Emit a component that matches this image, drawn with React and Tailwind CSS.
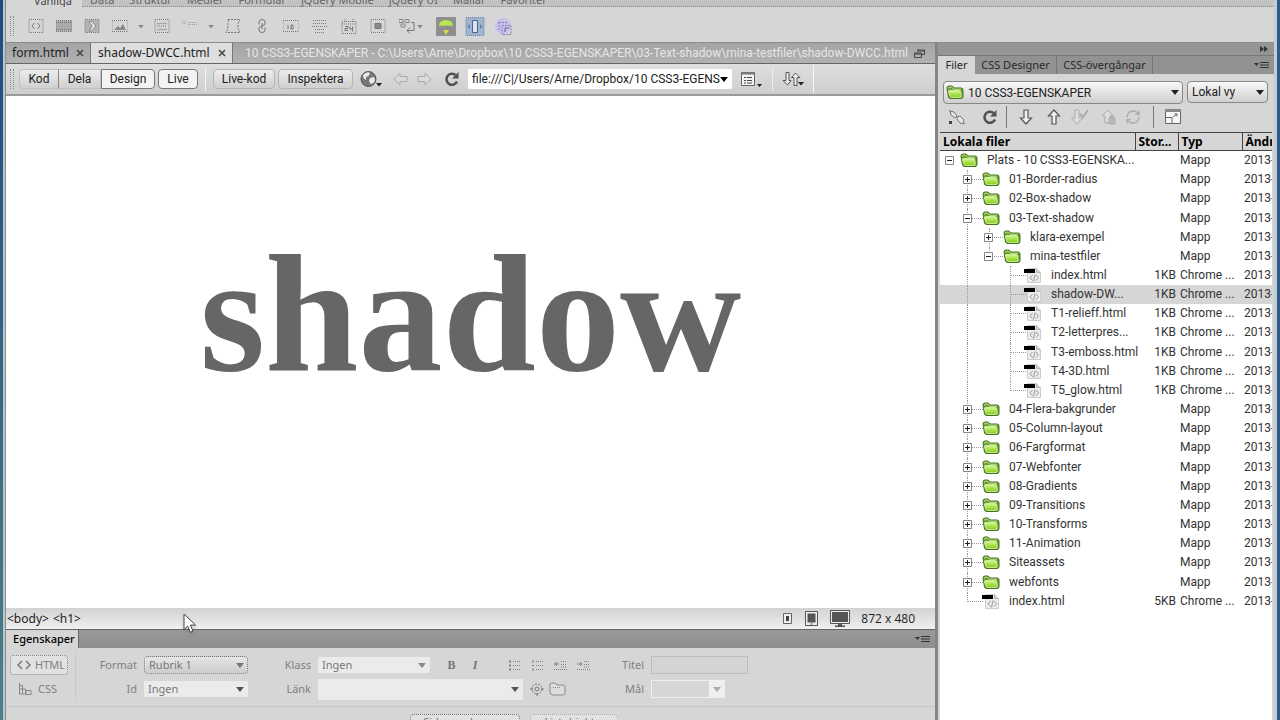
import React, { useState } from "react";
import { LuRefreshCw } from "react-icons/lu";

const insertTabs = ["Data", "Struktur", "Medier", "Formulär", "jQuery Mobile", "jQuery UI", "Mallar", "Favoriter"];

const files = [
  { name: "Plats - 10 CSS3-EGENSKA...", depth: 0, kind: "open", type: "Mapp" },
  { name: "01-Border-radius", depth: 1, kind: "closed", type: "Mapp" },
  { name: "02-Box-shadow", depth: 1, kind: "closed", type: "Mapp" },
  { name: "03-Text-shadow", depth: 1, kind: "open", type: "Mapp" },
  { name: "klara-exempel", depth: 2, kind: "closed", type: "Mapp" },
  { name: "mina-testfiler", depth: 2, kind: "open", type: "Mapp", last: true },
  { name: "index.html", depth: 3, kind: "file", size: "1KB", type: "Chrome ..." },
  { name: "shadow-DW...", depth: 3, kind: "file", size: "1KB", type: "Chrome ..." },
  { name: "T1-relieff.html", depth: 3, kind: "file", size: "1KB", type: "Chrome ..." },
  { name: "T2-letterpres...", depth: 3, kind: "file", size: "1KB", type: "Chrome ..." },
  { name: "T3-emboss.html", depth: 3, kind: "file", size: "1KB", type: "Chrome ..." },
  { name: "T4-3D.html", depth: 3, kind: "file", size: "1KB", type: "Chrome ..." },
  { name: "T5_glow.html", depth: 3, kind: "file", size: "1KB", type: "Chrome ...", last: true },
  { name: "04-Flera-bakgrunder", depth: 1, kind: "closed", type: "Mapp" },
  { name: "05-Column-layout", depth: 1, kind: "closed", type: "Mapp" },
  { name: "06-Fargformat", depth: 1, kind: "closed", type: "Mapp" },
  { name: "07-Webfonter", depth: 1, kind: "closed", type: "Mapp" },
  { name: "08-Gradients", depth: 1, kind: "closed", type: "Mapp" },
  { name: "09-Transitions", depth: 1, kind: "closed", type: "Mapp" },
  { name: "10-Transforms", depth: 1, kind: "closed", type: "Mapp" },
  { name: "11-Animation", depth: 1, kind: "closed", type: "Mapp" },
  { name: "Siteassets", depth: 1, kind: "closed", type: "Mapp" },
  { name: "webfonts", depth: 1, kind: "closed", type: "Mapp" },
  { name: "index.html", depth: 1, kind: "file", size: "5KB", type: "Chrome ...", last: true },
];

/* ---------- icons ---------- */

function Caret({ className = "" }) {
  return (
    <svg viewBox="0 0 8 5" className={`w-2 h-[5px] shrink-0 ${className}`} fill="currentColor">
      <path d="M0 0h8L4 5z" />
    </svg>
  );
}

function FolderIcon() {
  return (
    <svg viewBox="0 0 18 15" className="w-[18px] h-[15px] shrink-0">
      <defs>
        <linearGradient id="folder" x1="0" y1="0" x2="0" y2="1">
          <stop offset="0" stopColor="#d6f79c" />
          <stop offset=".5" stopColor="#a9e34c" />
          <stop offset="1" stopColor="#86cc22" />
        </linearGradient>
      </defs>
      <path d="M1 3q0-2 2-2h3l2 2h7q2 0 2 2v6.500q0 2-2 2H5Q3 13.500 2.500 12z" fill="#6a9f35" stroke="#44701c" />
      <path d="M2.200 3.500q0-1.300 1.300-1.300h2.200l2 2H15" fill="none" stroke="#c4ea8c" />
      <path d="M3.500 5.500H13q1.500 0 1.700 1.500l.6 4q.2 1.500-1.300 1.500H5.500q-1.300 0-1.600-1.300L2.500 7q-.3-1.500 1-1.500z" fill="url(#folder)" stroke="#e6fbc0" strokeWidth=".7" />
    </svg>
  );
}

function FileIcon() {
  return (
    <svg viewBox="0 0 18 17" className="w-[18px] h-[17px] shrink-0">
      <path d="M3.500 1.500h9l4 4v10h-13z" fill="#ececec" stroke="#cdcdcd" />
      <path d="M12.500 1.500v4h4" fill="#d2d2d2" stroke="#b5b5b5" />
      <path d="M0 2h11v4H0z" fill="#000" />
      <path d="M8.500 8 6 10.800l2.500 2.700M12 8l2.500 2.800-2.500 2.700M11 7.500l-1.500 7" fill="none" stroke="#999" />
    </svg>
  );
}

function Expander({ open }) {
  return (
    <svg viewBox="0 0 9 9" className="relative w-[9px] h-[9px] shrink-0">
      <path d="M.5.5h8v8h-8z" fill="#fff" stroke="#858585" />
      <path d={open ? "M2 4.500h5" : "M2 4.500h5M4.500 2v5"} stroke="#222" />
    </svg>
  );
}

function MenuIcon() {
  return (
    <svg viewBox="0 0 16 9" className="w-4 h-[9px]" fill="none" stroke="#333">
      <path d="M0 2h5L2.500 5z" fill="#333" stroke="none" />
      <path d="M6 1.500h9M6 4h9M6 6.500h9" />
    </svg>
  );
}

function DownArrow({ color = "#555" }) {
  return (
    <svg viewBox="0 0 14 16" className="w-3.5 h-4" fill="#f1f1f1" stroke={color} strokeWidth="1.2">
      <path d="M5 1h4v8h3.500L7 15 1.500 9H5z" />
    </svg>
  );
}

function UpArrow({ color = "#555" }) {
  return (
    <svg viewBox="0 0 14 16" className="w-3.5 h-4" fill="#f1f1f1" stroke={color} strokeWidth="1.2">
      <path d="M5 15h4V7h3.500L7 1 1.500 7H5z" />
    </svg>
  );
}

function ReloadIcon() {
  return (
    <svg viewBox="0 0 16 16" className="w-4 h-4" fill="none" stroke="#505050" strokeWidth="2.600">
      <path d="M13 10.500A5.500 5.500 0 1 1 11.500 4" />
      <path d="M14.500 1v6.500H8z" fill="#505050" stroke="none" />
    </svg>
  );
}

// Stippled look of a disabled insert icon
function Stipple({ children, size = "w-4 h-4" }) {
  return (
    <svg viewBox="0 0 16 16" className={size} fill="none" stroke="#777" strokeDasharray="1 1">
      {children}
    </svg>
  );
}

const insertIcons = [
  { label: "Div", art: <><path d="M1 1.500h14v13H1z" /><path d="M6.500 5 4 8l2.500 3M9.500 5 12 8l-2.500 3" strokeDasharray="none" /></> },
  { label: "HTML5 Video", art: <><path d="M0 2.500h16v11H0z" fill="#aaa" /><path d="M0 4.500h16M0 11.500h16" /></> },
  { label: "Canvas", art: <><path d="M1 1.500h14v13H1z" fill="#b4b4b4" /><path d="m5 4 3-1 4 5-4 5H5l3-5z" fill="#ddd" strokeDasharray="none" stroke="#888" /></> },
  { label: "Bild", arrow: true, art: <><path d="M0 2.500h16v11H0z" /><path d="M2 12 6 8l2 2 3-4 3 6z" fill="#888" strokeDasharray="none" stroke="none" /></> },
  { label: "Tabell", art: <><path d="M1 1.500h14v13H1zM3 8h10" /><path d="m3 5 2 1 2-1 2 1 2-1 2 1M3 11l2 1 2-1 2 1 2-1 2 1" strokeDasharray="none" stroke="#999" /></> },
  { label: "Head", arrow: true, art: <><path d="M0 5.500h4M1 3.500h3M6 4.500h9M6 6.500h9" stroke="#999" /></> },
];

const insertIcons2 = [
  { label: "Skript", art: <path d="M3 1.500h12l-2 4v5l2 4H1l2-4v-5z" strokeDasharray="2 1" /> },
  { label: "Hyperlänk", art: <><path d="M5 6.500V4q0-2.500 3-2.500T11 4v2q0 1.500-3 1.500M11 9.500V12q0 2.500-3 2.500T5 12v-2q0-1.500 3-1.500M8 5v6" strokeDasharray="none" /></> },
  { label: "E-post", art: <><path d="M0 2.500h16v11H0z" /><path d="M5 7v4M8 7h2v4H8z" strokeDasharray="none" /></> },
  { label: "Linje", art: <><path d="M1 2.500h14M1 5.500h14M0 8.500h16M3 11.500h10M3 14.500h10" /></> },
  { label: "Datum", art: <><path d="M1 3.500h14v12H1zM1 6h14M4 1v3M12 1v3" /><path d="M4 8.500h3v2H4v2h3M9 8.500v2.500h3M11.500 8.500v5" strokeDasharray="none" /></> },
  { label: "IFRAME", art: <><path d="M1 1.500h14v13H1z" /><path d="M5 5.500h6v5H5z" fill="#888" strokeDasharray="none" /></> },
  { label: "Tecken", art: <><path d="M0 1.500h4v3H0zM6 1.500h4v3H6zM2 6h4v3H2z" strokeDasharray="none" stroke="#888" /><path d="M12 4.500h3v8H8l3-3M8 12.500l3 3" strokeDasharray="none" /></> },
];

function IconButton({ label, className = "", children, ...rest }) {
  return (
    <button aria-label={label} className={`flex items-center justify-center shrink-0 ${className}`} {...rest}>
      {children}
    </button>
  );
}

/* ---------- form helpers ---------- */

function Select({ id, label, options, className = "", caret = "text-[#222]", field = "" }) {
  return (
    <div className={`relative flex items-center ${className}`}>
      <select id={id} aria-label={label} className={`appearance-none w-full h-full outline-none ${field}`}>
        {options.map((o) => (
          <option key={o}>{o}</option>
        ))}
      </select>
      <Caret className={`absolute right-1 pointer-events-none ${caret}`} />
    </div>
  );
}

/* ---------- left column ---------- */

function InsertBar() {
  return (
    <header className="h-[43px] shrink-0 bg-[#d6d6d6] border-b border-[#8c8c8c] overflow-hidden">
      <nav className="flex h-[7px] items-end overflow-hidden pl-5 text-[11px] leading-[12px] text-[#666] font-['Noto_Sans',sans-serif]">
        <a href="#vanliga" className="w-14 pl-2 text-[#444]">Vanliga</a>
        <div className="flex flex-1 gap-[15px] pl-2 bg-[#c2c2c2] border-b border-dotted border-[#888]">
          {insertTabs.map((t) => (
            <a key={t} href="#insert">{t}</a>
          ))}
        </div>
      </nav>
      <div className="flex items-center h-9 pl-1 pt-0.5">
        <div className="w-1 h-5 border-x border-dotted border-[#888]" />
        <div className="flex items-center pl-2">
          {insertIcons.map((i) => (
            <React.Fragment key={i.label}>
              <IconButton label={i.label} className="w-7 h-6"><Stipple>{i.art}</Stipple></IconButton>
              {i.arrow && <span className="w-3.5 flex justify-center"><Caret className="text-[#888] scale-75" /></span>}
            </React.Fragment>
          ))}
          {insertIcons2.map((i) => (
            <IconButton key={i.label} label={i.label} className="w-[29px] h-6"><Stipple>{i.art}</Stipple></IconButton>
          ))}
          <span className="w-3.5 -ml-2 mr-1 flex justify-center"><Caret className="text-[#888] scale-75" /></span>
          <IconButton label="jQuery Mobile" className="w-[29px] h-6">
            <svg viewBox="0 0 20 19" className="w-5 h-[19px]">
              <path d="M.5.5h19v18H.5z" fill="#8e8e8e" stroke="#6f6f6f" strokeDasharray="1 1" />
              <path d="M3 9q0-6 7-6t7 6q-2-1-3.500 0-3-1-7 0Q5 8 3 9z" fill="#b4e84e" />
              <path d="M7 13h6l-3 5z" fill="#dcd455" />
            </svg>
          </IconButton>
          <IconButton label="Flytande stödrastersrad" className="w-[29px] h-6">
            <svg viewBox="0 0 20 19" className="w-5 h-[19px]">
              <path d="M1 .5h18v18H1z" fill="#9fb4d1" stroke="#66809f" strokeDasharray="1 1" />
              <path d="M7.500 3.500h5v12h-5z" fill="#d9e5f5" stroke="#51667f" />
              <path d="m5 7-3 2.500L5 12M15 7l3 2.500-3 2.500" fill="#6d84a4" />
            </svg>
          </IconButton>
          <IconButton label="Edge Animate" className="w-[29px] h-6">
            <svg viewBox="0 0 20 19" className="w-5 h-[19px]">
              <circle cx="9" cy="9" r="8" fill="#c6c2ea" />
              <path d="M5 5.500h8M5 5v8M8 8.500h9v9H8z" fill="none" stroke="#857fb8" strokeDasharray="2 1" />
              <path d="M11 15v-4h4" fill="none" stroke="#665f9c" />
            </svg>
          </IconButton>
        </div>
      </div>
    </header>
  );
}

function DocumentTabs() {
  return (
    <div className="flex items-stretch h-[21px] shrink-0 bg-gradient-to-b from-[#a4a4a4] to-[#b2b2b2] border-b border-[#666] text-[12px] leading-[20px] font-['Noto_Sans',sans-serif]">
      <div className="flex items-center justify-between w-[85px] px-1.5 border-r border-[#777] text-[#222]">
        <a href="#form">form.html</a>
        <button aria-label="Stäng form.html">
          <svg viewBox="0 0 8 8" className="w-2 h-2" stroke="#444" strokeWidth="1.500"><path d="m1 1 6 6M7 1 1 7" /></svg>
        </button>
      </div>
      <div className="flex items-center justify-between w-[142px] pl-[7px] pr-1.5 border-r border-[#777] bg-[#dedede] text-[#222]">
        <a href="#shadow">shadow-DWCC.html</a>
        <button aria-label="Stäng shadow-DWCC.html">
          <svg viewBox="0 0 8 8" className="w-2 h-2" stroke="#444" strokeWidth="1.500"><path d="m1 1 6 6M7 1 1 7" /></svg>
        </button>
      </div>
      <p className="flex-1 min-w-0 pl-3 whitespace-nowrap text-[#e6e6e6] font-[Roboto,sans-serif]">
        10 CSS3-EGENSKAPER - C:\Users\Arne\Dropbox\10 CSS3-EGENSKAPER\03-Text-shadow\mina-testfiler\shadow-DWCC.html
      </p>
      <IconButton label="Återställ fönster" className="w-8">
        <svg viewBox="0 0 11 9" className="w-[11px] h-[9px]" fill="none" stroke="#444">
          <path d="M3 1h7.500v4.500H8M3 2h7M.5 4h7v4.500h-7zM.5 5h7" />
        </svg>
      </IconButton>
    </div>
  );
}

const viewBtn = "h-5 border text-[12px] leading-[18px] text-[#222] shrink-0";

function DocumentToolbar() {
  const [url, setUrl] = useState("file:///C|/Users/Arne/Dropbox/10 CSS3-EGENS");
  return (
    <div className="flex items-center h-8 shrink-0 bg-gradient-to-b from-[#dedede] to-[#cecece] border-b-2 border-[#9a9a9a] font-[Roboto,sans-serif]">
      <div className="w-1 h-5 ml-1 mr-[5px] shrink-0 border-x border-dotted border-[#888]" />
      <button className={`${viewBtn} w-10 rounded-l border-[#c0c0c0] border-r-[#888] bg-gradient-to-b from-[#ededed] to-[#cfcfcf]`}>Kod</button>
      <button className={`${viewBtn} w-[42px] border-[#c0c0c0] border-l-0 bg-gradient-to-b from-[#ededed] to-[#cfcfcf]`}>Dela</button>
      <button className={`${viewBtn} w-[54px] rounded-r border-[#777] bg-[#f3f3f3]`}>Design</button>
      <button className={`${viewBtn} w-10 ml-[3px] rounded border-[#777] bg-[#f3f3f3]`}>Live</button>
      <div className="w-px h-6 mx-[7px] shrink-0 bg-[#f2f2f2]" />
      <button className={`${viewBtn} w-[62px] rounded border-[#b4b4b4] bg-gradient-to-b from-[#ededed] to-[#cfcfcf]`}>Live-kod</button>
      <button className={`${viewBtn} w-[75px] ml-[3px] rounded border-[#b4b4b4] bg-gradient-to-b from-[#ededed] to-[#cfcfcf]`}>Inspektera</button>
      <IconButton label="Förhandsgranska i webbläsare" className="w-[22px] ml-[7px] mr-1.5">
        <svg viewBox="0 0 22 18" className="w-[22px] h-[18px]">
          <circle cx="8.500" cy="9" r="7.500" fill="#777" stroke="#555" />
          <path d="M3 5q4-4 7-2L8.500 6 6 7v3L3.500 8zM10 8l4-1q2 3-.5 6l-3 1-1.500-3z" fill="#e8e8e8" />
          <path d="M16 13h6l-3 3.500z" fill="#222" />
        </svg>
      </IconButton>
      <IconButton label="Bakåt" className="w-6">
        <svg viewBox="0 0 15 14" className="w-[15px] h-3.5" fill="#dadada" stroke="#aaa"><path d="M7 1v3.500h7v5H7V13L1 7z" /></svg>
      </IconButton>
      <IconButton label="Framåt" className="w-6">
        <svg viewBox="0 0 15 14" className="w-[15px] h-3.5" fill="#dadada" stroke="#aaa"><path d="M8 1v3.500H1v5h7V13l6-6z" /></svg>
      </IconButton>
      <IconButton label="Uppdatera" className="w-8"><ReloadIcon /></IconButton>
      <div className="relative flex items-center w-[264px] h-5">
        <input
          aria-label="Adress"
          value={url}
          onChange={(e) => setUrl(e.target.value)}
          className="w-full h-full pl-1 pr-2.5 bg-white outline-none text-[12px] text-[#222] font-[Roboto,sans-serif]"
        />
        <Caret className="absolute right-1 text-black" />
      </div>
      <IconButton label="Direktvyalternativ" className="w-[22px] ml-2 mr-2.5">
        <svg viewBox="0 0 22 18" className="w-[22px] h-[18px]">
          <path d="M1.500 2.500h13v13h-13z" fill="#f4f4f4" stroke="#666" />
          <path d="M1 2h14v2.500H1z" fill="#777" />
          <path d="M4 7.500h2M4 10.500h2M4 13h2M7 7.500h5M7 10.500h5M7 13h5" stroke="#444" />
          <path d="M17 14h5l-2.500 3z" fill="#222" />
        </svg>
      </IconButton>
      <div className="w-px h-6 shrink-0 bg-[#ededed]" />
      <IconButton label="Filhantering" className="w-[22px] mx-[9px]">
        <svg viewBox="0 0 22 18" className="w-[22px] h-[18px]" fill="#eee" stroke="#555">
          <path d="M4 2.500h3v8h2L5.500 15 1 10.500h3zM12 15.500h3v-8h3L13.500 3 9.500 7.500H12z" />
          <path d="M16 12h6l-3 3.500z" fill="#222" stroke="none" />
        </svg>
      </IconButton>
      <div className="w-px h-7 shrink-0 bg-[#f6f6f6]" />
    </div>
  );
}

function StatusBar() {
  return (
    <footer className="flex items-center h-[21px] shrink-0 pl-px pr-5 bg-gradient-to-b from-[#d2d2d2] to-[#f0f0f0] text-[12px] text-[#222] font-['Noto_Sans',sans-serif]">
      <button className="mr-1">&lt;body&gt;</button>
      <button>&lt;h1&gt;</button>
      <div className="flex items-center ml-auto">
        <IconButton label="Mobil" className="w-6">
          <svg viewBox="0 0 9 11" className="w-[9px] h-[11px]"><path d="M.5.5h8v10h-8z" fill="#eee" stroke="#666" /><path d="M3 3h3v5H3z" fill="#444" /></svg>
        </IconButton>
        <IconButton label="Surfplatta" className="w-6">
          <svg viewBox="0 0 13 15" className="w-[13px] h-[15px]"><path d="M.5.5h12v14H.5z" fill="#eee" stroke="#555" /><path d="M2.500 2.500h8v9h-8z" fill="#555" /><path d="M5.500 13h2" stroke="#444" /></svg>
        </IconButton>
        <IconButton label="Dator" className="w-[34px]">
          <svg viewBox="0 0 20 17" className="w-5 h-[17px]"><path d="M.5.5h19v13H.5z" fill="#eee" stroke="#555" /><path d="M2 2h16v10H2zM8 14h4v1.500h3V17H5v-1.500h3z" fill="#555" /></svg>
        </IconButton>
        <span className="pl-1 font-['Open_Sans',sans-serif]">872 x 480</span>
      </div>
    </footer>
  );
}

const propLabel = "pr-[7px] text-right text-[#808080]";
const propField = "h-[21px] pl-1 text-[#777] bg-[#ebebeb]";

function PropertiesPanel() {
  return (
    <section className="h-[91px] shrink-0 overflow-hidden bg-[#d6d6d6] text-[11px] font-['Noto_Sans',sans-serif]">
      <div className="flex items-stretch justify-between h-[19px] bg-gradient-to-b from-[#999] to-[#8e8e8e] border-t border-[#666]">
        <h2 className="w-[73px] pl-[7px] bg-[#d6d6d6] border-r border-[#666] font-medium leading-[18px] text-black">Egenskaper</h2>
        <IconButton label="Panelmeny" className="mr-1"><MenuIcon /></IconButton>
      </div>
      <div className="grid grid-cols-[70px_68px_104px_70px_277px_56px_97px] auto-rows-[24px] items-center pt-[5px] pb-[5px] border-b border-[#c6c6c6]">
        <div className="h-6 border-r border-[#cacaca] pl-1 pt-0.5">
          <button className="flex items-center gap-1 w-[58px] h-5 pl-1.5 rounded border border-dotted border-[#888] bg-[#e2e2e2] text-[#808080]">
            <svg viewBox="0 0 14 10" className="w-3.5 h-2.5" fill="none" stroke="#777" strokeWidth="1.500"><path d="M5 1 1 5l4 4M9 1l4 4-4 4" /></svg>
            HTML
          </button>
        </div>
        <label htmlFor="format" className={propLabel}>Format</label>
        <Select id="format" options={["Rubrik 1"]} caret="text-[#777]" field={`${propField} rounded border border-dotted border-[#777] pl-0.5 bg-gradient-to-b from-[#e6e6e6] to-[#cdcdcd]`} />
        <label htmlFor="klass" className={propLabel}>Klass</label>
        <div className="flex items-center">
          <Select id="klass" options={["Ingen"]} className="w-[113px] mr-2.5" caret="text-[#888]" field={propField} />
          <button className="w-6 font-bold text-[#777] text-[12px] font-['Liberation_Serif',serif]">B</button>
          <button className="w-6 mr-4 font-bold italic text-[#777] text-[12px] font-['Liberation_Serif',serif]">I</button>
          {["Osorterad lista", "Sorterad lista", "Minska indrag", "Öka indrag"].map((l, i) => (
            <IconButton key={l} label={l} className="w-[23px]">
              <svg viewBox="0 0 13 11" className="w-[13px] h-[11px]" fill="none" stroke="#808080">
                {i < 2 && <path d="M5 1.500h8M5 5.500h8M5 9.500h8" strokeDasharray="1 1" />}
                {i === 0 && <path d="M1 1.500h2M1 5.500h2M1 9.500h2" strokeWidth="2" />}
                {i === 1 && <path d="M2 0v3M1 5.500h2M2 8v3" />}
                {i > 1 && <path d="M0 9.500h13M7 1.500h6M7 4.500h6M7 7h6" strokeDasharray="1 1" />}
                {i === 2 && <path d="M0 4h5M3 2 1 4l2 2" />}
                {i === 3 && <path d="M0 4h5M3 2l2 2-2 2" />}
              </svg>
            </IconButton>
          ))}
        </div>
        <label htmlFor="titel" className={propLabel}>Titel</label>
        <input id="titel" className="w-full h-[18px] border border-[#bdbdbd] bg-[#d4d4d4]" />

        <div className="h-6 border-r border-[#cacaca] pl-1 pt-0.5">
          <button className="flex items-center gap-1.5 w-[58px] h-5 pl-2 text-[#808080]">
            <svg viewBox="0 0 14 14" className="w-3.5 h-3.5" fill="none" stroke="#888"><path d="M1.500 1v11h6V7h-6M1.500 3.500h3V12M8 8.500h5v4H8z" /></svg>
            CSS
          </button>
        </div>
        <label htmlFor="id" className={propLabel}>Id</label>
        <Select id="id" options={["Ingen"]} caret="text-[#555]" field={propField} />
        <label htmlFor="lank" className={propLabel}>Länk</label>
        <div className="flex items-center">
          <div className="relative flex items-center w-[205px] mr-1">
            <input id="lank" className={`${propField} w-full`} />
            <Caret className="absolute right-1 text-[#555]" />
          </div>
          <IconButton label="Peka på fil" className="w-5">
            <svg viewBox="0 0 14 14" className="w-3.5 h-3.5" fill="none" stroke="#777"><circle cx="7" cy="7" r="5" strokeDasharray="2 1" /><circle cx="7" cy="7" r="2" /><path d="M0 7h3M11 7h3M7 11v3" /></svg>
          </IconButton>
          <IconButton label="Bläddra efter fil" className="w-5">
            <svg viewBox="0 0 17 14" className="w-[17px] h-3.5" fill="#ddd" stroke="#888"><path d="M1 3q0-2 2-2h3l2 2h6q2 0 2 2v6q0 2-2 2H4q-3 0-3-3z" /><path d="M4 5.500h8" strokeDasharray="1 1" /></svg>
          </IconButton>
        </div>
        <label htmlFor="mal" className={propLabel}>Mål</label>
        <Select id="mal" options={[""]} className="w-[74px]" caret="text-[#aaa]" field="h-5 border border-[#efefef] border-r-[16px] bg-[#d6d6d6]" />
      </div>
      <div className="flex gap-2.5 pt-[7px] pl-[404px] text-[#777] leading-3">
        <button className="w-[110px] h-4 shrink-0 rounded border border-dotted border-[#777] bg-[#e2e2e2]">Sidegenskaper...</button>
        <button className="w-[88px] h-4 shrink-0 rounded border border-dotted border-[#aaa] bg-[#e2e2e2]">Listobjekt...</button>
      </div>
    </section>
  );
}

/* ---------- files panel ---------- */

function TreeCell({ file, index }) {
  const cols = [];
  for (let d = 1; d <= file.depth; d++) {
    const own = d === file.depth;
    const deep = d === 2 && index > 5;
    cols.push(
      <span key={d} className={`relative shrink-0 h-[19px] ${d === 1 ? "w-[22px] ml-[5px]" : "w-[21px]"}`}>
        {!deep && (
          <span className={`absolute left-[22px] top-0 border-l border-dotted border-[#999] ${own && file.last ? "h-2.5" : "h-[20px]"}`} />
        )}
        {own && <span className="absolute left-[22px] top-[9px] w-4 border-t border-dotted border-[#999]" />}
      </span>
    );
  }
  return (
    <div className="flex items-center h-[19px]">
      {cols}
      <span className={`relative flex items-center shrink-0 ${file.depth === 0 ? "pl-[5px] w-5" : "w-[15px] justify-start"}`}>
        <span className={file.depth === 0 ? "flex" : "flex -ml-1"}>
          {file.kind !== "file" && <Expander open={file.kind === "open"} />}
        </span>
      </span>
      <span className="relative">{file.kind === "file" ? <FileIcon /> : <FolderIcon />}</span>
      <span className="pl-[9px] whitespace-nowrap">{file.name}</span>
    </div>
  );
}

function FilesPanel() {
  const [selected, setSelected] = useState(7);
  const th = "h-[18px] p-0 pl-[3px] text-left font-bold leading-[16px] border-y border-[#444] bg-[#d6d6d6] overflow-hidden whitespace-nowrap";
  return (
    <aside className="flex flex-col w-[339px] shrink-0 border-l-[3px] border-[#858585] bg-[#d6d6d6] overflow-hidden">
      <div className="flex items-center justify-end h-[13px] shrink-0 pr-1.5 bg-[#959595] border-b border-[#777]">
        <IconButton label="Komprimera paneler">
          <svg viewBox="0 0 8 6" className="w-2 h-1.5" fill="#333"><path d="M0 0l4 3-4 3zM4 0l4 3-4 3z" /></svg>
        </IconButton>
      </div>
      <div className="flex items-stretch h-[18px] shrink-0 bg-[#929292] text-[11px] leading-[18px] text-[#2a2a2a] font-['Noto_Sans',sans-serif]">
        <button className="w-[37px] bg-[#d6d6d6]">Filer</button>
        <button className="w-[82px] border-r border-[#777]">CSS Designer</button>
        <button className="w-24 border-r border-[#777]">CSS-övergångar</button>
        <IconButton label="Panelmeny" className="ml-auto mr-1"><MenuIcon /></IconButton>
      </div>
      <div className="flex gap-1 pt-[7px] pl-[5px] pr-1.5 text-[12px] text-[#222] font-[Roboto,sans-serif]">
        <div className="relative flex-1 h-[23px]">
          <Select label="Webbplats" options={["10 CSS3-EGENSKAPER"]} className="h-full" field="pl-6 rounded-sm border border-[#888] bg-gradient-to-b from-[#f8f8f8] to-[#cfcfcf]" />
          <span className="absolute left-[3px] top-1 pointer-events-none"><FolderIcon /></span>
        </div>
        <Select label="Vy" options={["Lokal vy"]} className="w-[81px] h-[22px]" field="pl-1 rounded-sm border border-[#888] bg-gradient-to-b from-[#f8f8f8] to-[#cfcfcf]" />
      </div>
      <div className="flex items-center h-[28px] pl-[3px] pb-[3px] shrink-0">
        <IconButton label="Anslut" className="w-8">
          <svg viewBox="0 0 18 16" className="w-[18px] h-4" fill="#e4e4e4" stroke="#777">
            <path d="M1 12h3v3H1z" fill="#444" stroke="none" /><path d="m2 2 4 1 3 4-2 2-4-3zM9 8l3-1 4 4-1 4-3-1-3-4zM1 1l2 2M15 13l2 2" />
          </svg>
        </IconButton>
        <IconButton label="Uppdatera" className="w-[33px]"><ReloadIcon /></IconButton>
        <div className="w-px h-[22px] bg-[#777]" />
        <IconButton label="Hämta" className="w-[38px]"><DownArrow /></IconButton>
        <IconButton label="Lägg" className="w-[17px]"><UpArrow /></IconButton>
        <IconButton label="Checka ut" className="w-[35px]">
          <svg viewBox="0 0 18 16" className="w-[18px] h-4" fill="none" stroke="#aaa"><path d="M4 1h4v8h3.500L6 15 .5 9H4z" fill="#ddd" /><path d="m9 5 3 3 5-7" strokeWidth="2" /></svg>
        </IconButton>
        <IconButton label="Checka in" className="w-[23px]">
          <svg viewBox="0 0 16 16" className="w-4 h-4" fill="#ddd" stroke="#aaa"><path d="M4 14h5V7h3L7 1 1 7h3z" /><path d="M8 9.500h6V15H8zM9.500 9V7h3v2" fill="#bbb" /></svg>
        </IconButton>
        <IconButton label="Synkronisera" className="w-[25px]"><LuRefreshCw className="w-4 h-4 text-[#aaa]" /></IconButton>
        <div className="w-px h-[22px] ml-2 bg-[#777]" />
        <IconButton label="Expandera" className="w-[37px]">
          <svg viewBox="0 0 16 15" className="w-4 h-[15px]" fill="#f6f6f6" stroke="#666"><path d="M.5.5h15v14H.5z" /><path d="M0 0h16v3H0z" fill="#888" stroke="none" /><path d="M1 8.500h6v6M8 8l4-3M9.500 5H12v2.500" /></svg>
        </IconButton>
      </div>
      <div className="flex-1 mx-0.5 bg-white overflow-hidden">
        <table className="w-full h-[479px] table-fixed border-collapse text-[12px] leading-[19px] text-[#333] font-[Roboto,sans-serif]">
          <colgroup>
            <col />
            <col className="w-[43px]" />
            <col className="w-16" />
            <col className="w-[30px]" />
          </colgroup>
          <thead className="text-[12px] text-black font-['Noto_Sans',sans-serif]">
            <tr>
              <th className={th}>Lokala filer</th>
              <th className={`${th} border-l`}>Stor...</th>
              <th className={`${th} border-l`}>Typ</th>
              <th className={`${th} border-l`}>Ändrad</th>
            </tr>
          </thead>
          <tbody>
            {files.map((f, i) => (
              <tr key={i} onClick={() => setSelected(i)} className={selected === i ? "bg-[#d6d6d6]" : ""}>
                <td className="p-0"><TreeCell file={f} index={i} /></td>
                <td className="p-0 pr-0.5 text-right">{f.size}</td>
                <td className="p-0 pl-0.5 whitespace-nowrap">{f.type}</td>
                <td className="p-0 pl-0.5 whitespace-nowrap overflow-hidden">2013-</td>
              </tr>
            ))}
          </tbody>
        </table>
      </div>
    </aside>
  );
}

export default function App() {
  return (
    <div className="relative flex h-screen overflow-hidden bg-[#d6d6d6]">
      <div className="w-[5px] shrink-0 border-r-2 border-[#b9c6d0] bg-gradient-to-b from-[#1d4b7d] to-[#4e8088]" />
      <div className="flex flex-col flex-1 min-w-0 border-l border-[#8c8c8c]">
        <InsertBar />
        <div className="flex flex-1 min-h-0">
          <main className="flex flex-col flex-1 min-w-0">
            <DocumentTabs />
            <DocumentToolbar />
            <div className="flex-1 min-h-0 flex justify-center items-start pt-[120px] bg-white">
              <h1 className="font-bold text-[168px] leading-[195px] text-[#666] font-['Liberation_Serif',serif]">shadow</h1>
            </div>
            <StatusBar />
            <PropertiesPanel />
          </main>
          <FilesPanel />
        </div>
      </div>
      <div className="w-[6px] shrink-0 border-l-[3px] border-[#c4ccd6] bg-[#2f5a88]" />

      {/* mouse pointer */}
      <svg viewBox="0 0 14 21" className="absolute left-[183px] top-[613px] w-3.5 h-[21px] drop-shadow">
        <path d="M1 1v15.500l3.700-3.400 2.600 6.200 2.700-1.200-2.600-6H12.500z" fill="#fff" stroke="#444" />
      </svg>
    </div>
  );
}
